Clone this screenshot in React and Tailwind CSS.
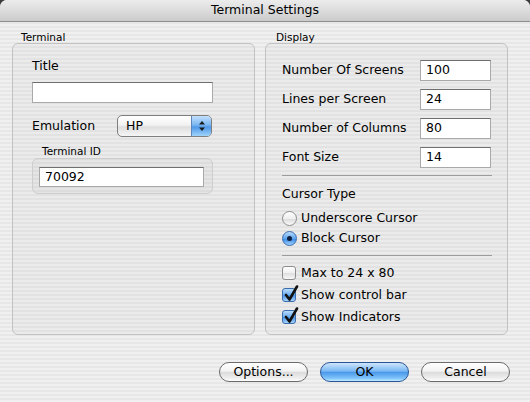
import React from 'react';

const font = { fontFamily: '"DejaVu Sans", "Liberation Sans", sans-serif' };

function Field({ value, className = '' }) {
	return (
		<div
			className={`flex items-center bg-white border border-[#a9a9a9] border-t-[#6e6e6e] pl-[5px] text-[12.5px] text-black ${className}`}
		>
			{value}
		</div>
	);
}

function Radio({ checked, label }) {
	return (
		<div className="flex items-center h-[20px]">
			{checked ? (
				<div className="w-[15px] h-[15px] rounded-full border border-[#3a6db0] bg-[linear-gradient(180deg,#b9dcfb_0%,#5ea4ee_50%,#3d8ce6_55%,#9fd0fb_100%)] flex items-center justify-center">
					<div className="w-[5px] h-[5px] rounded-full bg-[#102040]" />
				</div>
			) : (
				<div className="w-[15px] h-[15px] rounded-full border border-[#8d8d8d] bg-[linear-gradient(180deg,#ffffff_0%,#efefef_50%,#dcdcdc_55%,#fbfbfb_100%)]" />
			)}
			<span className="ml-[4px] text-[12.5px]">{label}</span>
		</div>
	);
}

function Check({ checked, label }) {
	return (
		<div className="flex items-center h-[22px]">
			<div
				className={`relative w-[14px] h-[14px] rounded-[3px] border ${
					checked
						? 'border-[#3a6db0] bg-[linear-gradient(180deg,#b9dcfb_0%,#6aaaf0_50%,#4a93e8_55%,#a8d4fb_100%)]'
						: 'border-[#8d8d8d] bg-[linear-gradient(180deg,#ffffff_0%,#efefef_50%,#dedede_55%,#f8f8f8_100%)]'
				}`}
			>
				{checked && (
					<svg className="absolute left-[1px] top-[-4px]" width="15" height="17" viewBox="0 0 15 17">
						<path d="M2 10 L5.5 14.5 L13 1.5" fill="none" stroke="#111" strokeWidth="2.6" strokeLinecap="round" strokeLinejoin="round" />
					</svg>
				)}
			</div>
			<span className="ml-[5px] text-[12.5px]">{label}</span>
		</div>
	);
}

function AquaButton({ label, primary }) {
	return (
		<div
			className={`w-[89px] h-[20px] rounded-full border flex items-center justify-center text-[12.5px] text-black ${
				primary
					? 'border-[#2a5594] bg-[linear-gradient(180deg,#cfe6fd_0%,#7ab9f3_45%,#4b98ea_52%,#7fc4fb_85%,#c4ecff_100%)]'
					: 'border-[#6b6b6b] bg-[linear-gradient(180deg,#ffffff_0%,#f3f3f3_45%,#dcdcdc_52%,#efefef_85%,#ffffff_100%)]'
			}`}
		>
			{label}
		</div>
	);
}

export default function App() {
	const stripes =
		'bg-[repeating-linear-gradient(180deg,#f0f0f0_0px,#f0f0f0_2px,#e7e7e7_2px,#e7e7e7_4px)]';
	return (
		<div className="w-[530px] h-[402px] bg-[#3c3c3c] overflow-hidden" style={font}>
			<div className={`w-[530px] h-[402px] flex flex-col rounded-t-[7px] overflow-hidden ${stripes} text-black`}>
				{/* title bar */}
				<div className="h-[22px] shrink-0 flex items-center justify-center bg-[linear-gradient(180deg,#ececec_0%,#dcdcdc_50%,#cbcbcb_100%)] border-b border-[#8f8f8f] text-[12.5px]">
					Terminal Settings
				</div>

				<div className="flex pl-[12px] gap-[10px]">
					{/* Terminal group */}
					<div className="w-[243px] flex flex-col">
						<div className="h-[21px] flex items-end pl-[9px] text-[10.5px] leading-[12px]">Terminal</div>
						<div className="h-[292px] rounded-[6px] border border-[#c2c2c2] bg-black/[0.02] pl-[19px] pt-[14px]">
							<div className="text-[12.5px] leading-[16px]">Title</div>
							<Field value="" className="mt-[8px] w-[181px] h-[21px]" />
							<div className="flex items-center mt-[12px] h-[22px]">
								<div className="w-[85px] text-[12.5px]">Emulation</div>
								<div className="w-[95px] h-[22px] rounded-[5px] border border-[#7f7f7f] flex overflow-hidden bg-[linear-gradient(180deg,#ffffff_0%,#f2f2f2_45%,#dedede_55%,#f6f6f6_100%)]">
									<div className="flex-1 flex items-center pl-[8px] text-[12.5px]">HP</div>
									<div className="w-[20px] border-l border-[#5f86b8] bg-[linear-gradient(180deg,#c3e0fc_0%,#79b6f2_45%,#4f98e8_55%,#9fd3fb_100%)] flex items-center justify-center">
										<svg width="8" height="12" viewBox="0 0 8 12">
											<path d="M4 1 L7 4.5 L1 4.5 Z" fill="#1a1a1a" />
											<path d="M4 11 L7 7.5 L1 7.5 Z" fill="#1a1a1a" />
										</svg>
									</div>
								</div>
							</div>
							<div className="mt-[8px] pl-[10px] text-[10.5px] leading-[12px]">Terminal ID</div>
							<div className="mt-[1px] w-[181px] h-[36px] rounded-[6px] border border-[#cdcdcd] bg-black/[0.025] pl-[6px] pt-[8px]">
								<Field value="70092" className="w-[165px] h-[20px]" />
							</div>
						</div>
					</div>

					{/* Display group */}
					<div className="w-[243px] flex flex-col">
						<div className="h-[21px] flex items-end pl-[11px] text-[10.5px] leading-[12px]">Display</div>
						<div className="h-[292px] rounded-[6px] border border-[#c2c2c2] bg-black/[0.02] pl-[16px] pt-[16px]">
							<div className="flex flex-col gap-[8px]">
								{[
									['Number Of Screens', '100'],
									['Lines per Screen', '24'],
									['Number of Columns', '80'],
									['Font Size', '14'],
								].map(([label, value]) => (
									<div key={label} className="flex items-center h-[21px]">
										<div className="w-[138px] text-[12.5px]">{label}</div>
										<Field value={value} className="w-[71px] h-[21px]" />
									</div>
								))}
							</div>
							<div className="mt-[7px] w-[210px] h-px bg-[#9c9c9c]" />
							<div className="mt-[10px] text-[12.5px] leading-[16px]">Cursor Type</div>
							<div className="mt-[6px] flex flex-col">
								<Radio label="Underscore Cursor" />
								<Radio checked label="Block Cursor" />
							</div>
							<div className="mt-[7px] w-[210px] h-px bg-[#9c9c9c]" />
							<div className="mt-[6px] flex flex-col">
								<Check label="Max to 24 x 80" />
								<Check checked label="Show control bar" />
								<Check checked label="Show Indicators" />
							</div>
						</div>
					</div>
				</div>

				<div className="mt-[27px] flex justify-end gap-[12px] pr-[20px]">
					<AquaButton label="Options..." />
					<AquaButton label="OK" primary />
					<AquaButton label="Cancel" />
				</div>
			</div>
		</div>
	);
}
